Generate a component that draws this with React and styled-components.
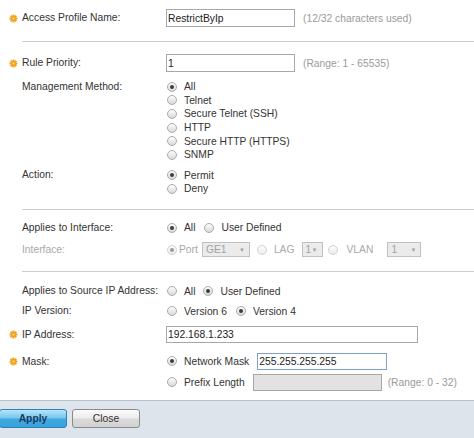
import React from 'react';
import styled, { createGlobalStyle } from 'styled-components';

const GlobalStyle = createGlobalStyle`
  html, body {
    margin: 0;
    padding: 0;
    background: #fff;
  }
  body {
    font-family: "Liberation Sans", Arial, sans-serif;
    font-size: 10.3px;
    color: #333;
    width: 474px;
    height: 438px;
    overflow: hidden;
  }
`;

const Page = styled.div`
  display: flex;
  flex-direction: column;
  height: 438px;
`;

const Form = styled.div`
  flex: 1;
  padding-top: 9px;
`;

const Row = styled.div`
  display: grid;
  grid-template-columns: 13px 144px 1fr;
  padding-left: 9px;
  margin-top: ${({ $mt }) => $mt || 0}px;
`;

const Mark = styled.span`
  display: flex;
  align-items: center;
  height: ${({ $h }) => $h}px;
`;

const Label = styled.div`
  height: ${({ $h }) => $h}px;
  line-height: ${({ $h }) => $h}px;
  white-space: nowrap;
  color: ${({ $disabled }) => ($disabled ? '#a9a9a9' : '#333')};
`;

const Controls = styled.div`
  display: flex;
  flex-direction: column;
`;

const Line = styled.div`
  display: flex;
  align-items: center;
  height: ${({ $h }) => $h}px;
  margin-top: ${({ $mt }) => $mt || 0}px;
  white-space: nowrap;
  color: ${({ $disabled }) => ($disabled ? '#a9a9a9' : '#333')};
`;

const Divider = styled.div`
  margin: ${({ $mt }) => $mt}px 0 0 22px;
  height: 1px;
  background: #cdcdcd;
`;

const TextBox = styled.input`
  box-sizing: border-box;
  width: ${({ $w }) => $w}px;
  height: ${({ $h }) => $h}px;
  margin: 0;
  padding: 0 1px;
  border: 1px solid ${({ $focus }) => ($focus ? '#7f9fd0' : '#a7a7a7')};
  background: ${({ disabled }) => (disabled ? '#e2e2e2' : '#fff')};
  font: inherit;
  color: #222;
  outline: none;
`;

const Hint = styled.span`
  color: #9a9a9a;
  margin-left: ${({ $ml }) => $ml || 8}px;
`;

const Option = styled.span`
  display: inline-flex;
  align-items: center;
  margin-right: ${({ $mr }) => $mr || 0}px;
`;

const Radio = styled.span`
  box-sizing: border-box;
  width: 10px;
  height: 10px;
  border-radius: 50%;
  border: 1px solid ${({ $disabled }) => ($disabled ? '#d2d2d2' : '#ababab')};
  background: ${({ $disabled }) =>
    $disabled
      ? 'linear-gradient(#fbfbfb, #ececec)'
      : 'linear-gradient(#fdfdfd, #d9d9d9)'};
  display: inline-flex;
  align-items: center;
  justify-content: center;
  margin-left: 1px;
  margin-right: ${({ $gap }) => ($gap === undefined ? 7 : $gap)}px;
  flex-shrink: 0;
  &::after {
    content: '';
    display: ${({ $checked }) => ($checked ? 'block' : 'none')};
    width: 4px;
    height: 4px;
    border-radius: 50%;
    background: ${({ $disabled }) => ($disabled ? '#9a9a9a' : '#3c3c3c')};
  }
`;

const FakeSelect = styled.span`
  box-sizing: border-box;
  display: inline-flex;
  align-items: center;
  justify-content: space-between;
  width: ${({ $w }) => $w}px;
  height: 15px;
  padding: 0 4px 0 3px;
  border: 1px solid #c2c2c2;
  background: #ebebeb;
  color: #a2a2a2;
  margin-left: ${({ $ml }) => $ml || 0}px;
  margin-right: ${({ $mr }) => $mr || 0}px;
  span {
    font-size: 6px;
  }
`;

const Footer = styled.div`
  height: 38px;
  box-sizing: border-box;
  border-top: 1px solid #b6c1cc;
  background: #dde4eb;
  padding-top: 8px;
  display: flex;
  gap: 5px;
`;

const Button = styled.button`
  box-sizing: border-box;
  width: 68px;
  height: 19px;
  margin: 0;
  padding: 0;
  border-radius: 3px;
  font-family: inherit;
  font-size: 10.3px;
  cursor: pointer;
  border: 1px solid ${({ $primary }) => ($primary ? '#2d80b8' : '#8b8b8b')};
  color: ${({ $primary }) => ($primary ? '#1c3a60' : '#333')};
  font-weight: ${({ $primary }) => ($primary ? 'bold' : 'normal')};
  background: ${({ $primary }) =>
    $primary
      ? 'linear-gradient(#b9e4f8, #76c7ef 45%, #3ea8e0 55%, #3aa2db)'
      : 'linear-gradient(#fbfbfb, #ececec 48%, #dadada 52%, #d2d2d2)'};
  &:first-child {
    margin-left: -1px;
  }
`;

function Gear() {
  const teeth = [0, 45, 90, 135];
  return (
    <svg width="9" height="9" viewBox="0 0 18 18">
      {teeth.map((a) => (
        <rect
          key={a}
          x="7"
          y="1"
          width="4"
          height="16"
          rx="1"
          fill="#f2a31f"
          transform={`rotate(${a} 9 9)`}
        />
      ))}
      <circle cx="9" cy="9" r="5.5" fill="#f2a31f" />
      <circle cx="9" cy="9" r="2.2" fill="#fbd98c" />
    </svg>
  );
}

function Field({ label, required, h, mt, disabled, children }) {
  return (
    <Row $mt={mt}>
      <Mark $h={h}>{required && <Gear />}</Mark>
      <Label $h={h} $disabled={disabled}>{label}</Label>
      <Controls>{children}</Controls>
    </Row>
  );
}

const methods = ['All', 'Telnet', 'Secure Telnet (SSH)', 'HTTP', 'Secure HTTP (HTTPS)', 'SNMP'];

export default function App() {
  return (
    <Page>
      <GlobalStyle />
      <Form>
        <Field label="Access Profile Name:" required h={18}>
          <Line $h={18}>
            <TextBox readOnly value="RestrictByIp" $w={129} $h={18} />
            <Hint>(12/32 characters used)</Hint>
          </Line>
        </Field>

        <Divider $mt={14} />

        <Field label="Rule Priority:" required h={18} mt={12}>
          <Line $h={18}>
            <TextBox readOnly value="1" $w={129} $h={18} />
            <Hint>(Range: 1 - 65535)</Hint>
          </Line>
        </Field>

        <Field label="Management Method:" h={13.6} mt={8}>
          {methods.map((m, i) => (
            <Line key={m} $h={13.6}>
              <Radio $checked={i === 0} />
              {m}
            </Line>
          ))}
        </Field>

        <Field label="Action:" h={13.8} mt={6.6}>
          <Line $h={13.8}>
            <Radio $checked />
            Permit
          </Line>
          <Line $h={13.8}>
            <Radio />
            Deny
          </Line>
        </Field>

        <Divider $mt={13} />

        <Field label="Applies to Interface:" h={14} mt={11}>
          <Line $h={14}>
            <Option $mr={8}>
              <Radio $checked />
              All
            </Option>
            <Option>
              <Radio />
              User Defined
            </Option>
          </Line>
        </Field>

        <Field label="Interface:" h={16} mt={7} disabled>
          <Line $h={16} $disabled>
            <Radio $checked $disabled $gap={2} />
            Port
            <FakeSelect $w={48} $ml={4} $mr={6}>
              GE1<span>▼</span>
            </FakeSelect>
            <Radio $disabled />
            LAG
            <FakeSelect $w={21} $ml={7} $mr={4}>
              1<span>▼</span>
            </FakeSelect>
            <Radio $disabled $gap={9} />
            VLAN
            <FakeSelect $w={34} $ml={14}>
              1<span>▼</span>
            </FakeSelect>
          </Line>
        </Field>

        <Divider $mt={13} />

        <Field label="Applies to Source IP Address:" h={14} mt={12.5}>
          <Line $h={14}>
            <Option $mr={7}>
              <Radio />
              All
            </Option>
            <Option>
              <Radio $checked />
              User Defined
            </Option>
          </Line>
        </Field>

        <Field label="IP Version:" h={14} mt={6}>
          <Line $h={14}>
            <Option $mr={8}>
              <Radio />
              Version 6
            </Option>
            <Option>
              <Radio $checked />
              Version 4
            </Option>
          </Line>
        </Field>

        <Field label="IP Address:" required h={17} mt={8}>
          <Line $h={17}>
            <TextBox readOnly value="192.168.1.233" $w={252} $h={17} />
          </Line>
        </Field>

        <Field label="Mask:" required h={17} mt={9.5}>
          <Line $h={17}>
            <Radio $checked />
            Network Mask
            <Hint $ml={8} />
            <TextBox readOnly value="255.255.255.255" $w={130} $h={17} $focus />
          </Line>
          <Line $h={17} $mt={4}>
            <Radio />
            Prefix Length
            <Hint $ml={8} />
            <TextBox disabled value="" $w={129} $h={17} />
            <Hint $ml={6}>(Range: 0 - 32)</Hint>
          </Line>
        </Field>
      </Form>

      <Footer>
        <Button $primary>Apply</Button>
        <Button>Close</Button>
      </Footer>
    </Page>
  );
}
